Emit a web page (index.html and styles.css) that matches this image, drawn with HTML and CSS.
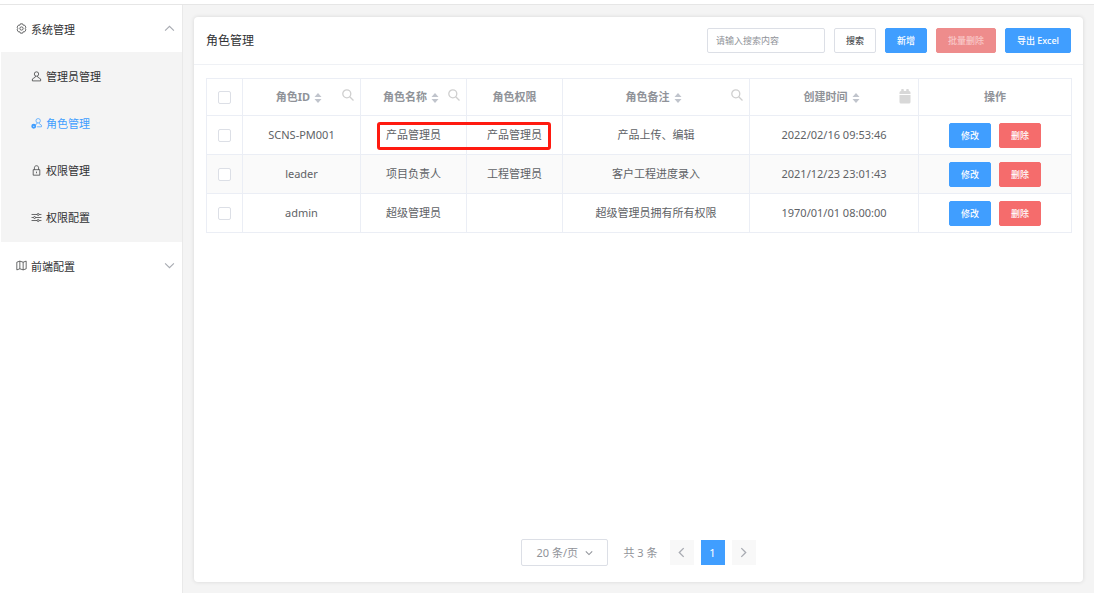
FILE: index.html
```
<!DOCTYPE html>
<html lang="zh-CN">
<head>
    <meta charset="UTF-8">
    <meta name="viewport" content="width=device-width, initial-scale=1.0">
    <title>角色管理</title>
    <link rel="stylesheet" href="styles.css">
</head>
<body>
    <!-- shared icons -->
    <svg class="sprite" aria-hidden="true">
        <symbol id="icon-search" viewBox="0 0 12 12">
            <circle cx="4.8" cy="4.8" r="4" />
            <path d="M7.7 7.7L11.5 11.5" />
        </symbol>
        <symbol id="icon-up" viewBox="0 0 10 10"><path d="M1 7L5 3L9 7" /></symbol>
        <symbol id="icon-down" viewBox="0 0 10 10"><path d="M1 3L5 7L9 3" /></symbol>
        <symbol id="icon-left" viewBox="0 0 10 10"><path d="M7 1L3 5L7 9" /></symbol>
        <symbol id="icon-right" viewBox="0 0 10 10"><path d="M3 1L7 5L3 9" /></symbol>
        <symbol id="icon-sort" viewBox="0 0 8 12">
            <path d="M4 1L7.5 5H0.5ZM4 11L7.5 7H0.5Z" />
        </symbol>
    </svg>

    <header class="topbar"></header>
    <div class="layout">
        <nav class="sidebar">
            <button class="menu-title" type="button">
                <svg class="icon" viewBox="0 0 20 20">
                    <path d="M8 1.5H12L13 4L15.5 3.8L18 7.5L16.8 10L18 12.5L15.5 16.2L13 16L12 18.5H8L7 16L4.5 16.2L2 12.5L3.2 10L2 7.5L4.5 3.8L7 4Z" />
                    <circle cx="10" cy="10" r="3" />
                </svg>
                <span>系统管理</span>
                <svg class="icon arrow"><use href="#icon-up" /></svg>
            </button>
            <div class="submenu">
                <a href="#" class="menu-item">
                    <svg class="icon" viewBox="0 0 20 20">
                        <circle cx="10" cy="5.5" r="4" />
                        <path d="M8 9.5V11L2.5 14.5V18H17.5V14.5L12 11V9.5" />
                    </svg>
                    <span>管理员管理</span>
                </a>
                <a href="#" class="menu-item active">
                    <svg class="icon" viewBox="0 0 20 20">
                        <circle cx="13" cy="5" r="4" />
                        <path d="M11 9V10.5L8 12M15 9V10.5L19 13V16H11" />
                        <circle cx="5" cy="15" r="2.8" stroke-width="3.4" />
                    </svg>
                    <span>角色管理</span>
                </a>
                <a href="#" class="menu-item">
                    <svg class="icon" viewBox="0 0 20 20">
                        <path d="M4 8.5H16V18.5H4ZM6.2 8.5V5C6.2 0 13.8 0 13.8 5V8.5M10 12V15" />
                    </svg>
                    <span>权限管理</span>
                </a>
                <a href="#" class="menu-item">
                    <svg class="icon" viewBox="0 0 20 20">
                        <path d="M1 4.5H11M15 4.5H19M1 10H4.5M8.5 10H19M1 15.5H11M15 15.5H19" />
                        <circle cx="13" cy="4.5" r="1.8" />
                        <circle cx="6.5" cy="10" r="1.8" />
                        <circle cx="13" cy="15.5" r="1.8" />
                    </svg>
                    <span>权限配置</span>
                </a>
            </div>
            <button class="menu-title" type="button">
                <svg class="icon" viewBox="0 0 20 20">
                    <path d="M1.5 4L7 2L13 4L18.5 2V16L13 18L7 16L1.5 18ZM7 2V16M13 4V18" />
                </svg>
                <span>前端配置</span>
                <svg class="icon arrow"><use href="#icon-down" /></svg>
            </button>
        </nav>

        <main class="main">
            <section class="card">
                <div class="card-header">
                    <h1>角色管理</h1>
                    <form class="toolbar">
                        <input type="text" class="search-input" placeholder="请输入搜索内容" aria-label="搜索内容">
                        <button type="button" class="btn">搜索</button>
                        <button type="button" class="btn primary">新增</button>
                        <button type="button" class="btn danger" disabled>批量删除</button>
                        <button type="button" class="btn primary">导出 Excel</button>
                    </form>
                </div>

                <div class="card-body">
                    <table>
                        <colgroup>
                            <col class="col-check">
                            <col class="col-id">
                            <col class="col-name">
                            <col class="col-auth">
                            <col class="col-remark">
                            <col class="col-time">
                            <col class="col-action">
                        </colgroup>
                        <thead>
                            <tr>
                                <th><input type="checkbox" aria-label="全选"></th>
                                <th class="sortable">角色ID<svg class="sort"><use href="#icon-sort" /></svg><svg class="filter"><use href="#icon-search" /></svg></th>
                                <th class="sortable">角色名称<svg class="sort"><use href="#icon-sort" /></svg><svg class="filter"><use href="#icon-search" /></svg></th>
                                <th>角色权限</th>
                                <th class="sortable">角色备注<svg class="sort"><use href="#icon-sort" /></svg><svg class="filter"><use href="#icon-search" /></svg></th>
                                <th class="sortable">创建时间<svg class="sort"><use href="#icon-sort" /></svg><svg class="filter calendar" viewBox="0 0 12 15">
                                    <path d="M0.5 5V3.5Q0.5 2 2 2H2.2V0.8Q2.2 0 3 0H4Q4.8 0 4.8 0.8V2H7.2V0.8Q7.2 0 8 0H9Q9.8 0 9.8 0.8V2H10Q11.5 2 11.5 3.5V5ZM0.5 6H11.5V13Q11.5 14.5 10 14.5H2Q0.5 14.5 0.5 13Z" />
                                </svg></th>
                                <th>操作</th>
                            </tr>
                        </thead>
                        <tbody>
                            <tr>
                                <td><input type="checkbox" aria-label="SCNS-PM001"></td>
                                <td>SCNS-PM001</td>
                                <td class="marked">产品管理员</td>
                                <td>产品管理员</td>
                                <td>产品上传、编辑</td>
                                <td>2022/02/16 09:53:46</td>
                                <td><div class="actions"><button type="button" class="btn primary">修改</button><button type="button" class="btn danger">删除</button></div></td>
                            </tr>
                            <tr>
                                <td><input type="checkbox" aria-label="leader"></td>
                                <td>leader</td>
                                <td>项目负责人</td>
                                <td>工程管理员</td>
                                <td>客户工程进度录入</td>
                                <td>2021/12/23 23:01:43</td>
                                <td><div class="actions"><button type="button" class="btn primary">修改</button><button type="button" class="btn danger">删除</button></div></td>
                            </tr>
                            <tr>
                                <td><input type="checkbox" aria-label="admin"></td>
                                <td>admin</td>
                                <td>超级管理员</td>
                                <td></td>
                                <td>超级管理员拥有所有权限</td>
                                <td>1970/01/01 08:00:00</td>
                                <td><div class="actions"><button type="button" class="btn primary">修改</button><button type="button" class="btn danger">删除</button></div></td>
                            </tr>
                        </tbody>
                    </table>
                </div>

                <div class="pagination">
                    <div class="page-size">
                        <select aria-label="每页条数">
                            <option>20 条/页</option>
                            <option>50 条/页</option>
                        </select>
                        <svg><use href="#icon-down" /></svg>
                    </div>
                    <span class="total">共 3 条</span>
                    <div class="pager">
                        <button type="button" aria-label="上一页" disabled><svg><use href="#icon-left" /></svg></button>
                        <button type="button" class="current">1</button>
                        <button type="button" aria-label="下一页" disabled><svg><use href="#icon-right" /></svg></button>
                    </div>
                </div>
            </section>
        </main>
    </div>
</body>
</html>
```
FILE: styles.css
```
*, *::after {
    box-sizing: border-box;
}

body {
    margin: 0;
    min-height: 100vh;
    display: flex;
    flex-direction: column;
    font-family: "Noto Sans", "Noto Sans CJK SC", sans-serif;
    font-size: 11px;
    line-height: 16px;
    color: #606266;
    background-color: #fff;
}

button, input, select {
    font-family: inherit;
    margin: 0;
}

svg {
    fill: none;
    stroke: currentColor;
}

.sprite {
    position: absolute;
    width: 0;
    height: 0;
}

.topbar {
    height: 5px;
    border-bottom: 1px solid #e6e6e6;
}

.layout {
    flex: 1;
    display: flex;
}

/* sidebar */
.sidebar {
    width: 183px;
    padding-left: 1px;
    border-right: 1px solid #e9e9e9;
}

.menu-title, .menu-item {
    display: flex;
    align-items: center;
    gap: 4px;
    width: 100%;
    height: 47px;
    color: #303133;
    font-size: 11px;
    text-decoration: none;
}

.menu-title {
    padding: 0 7px 0 15px;
    border: none;
    background: none;
    cursor: pointer;
}

.menu-item {
    padding-left: 30px;
}

.menu-item.active {
    color: #409eff;
}

.submenu {
    padding: 1px 0;
    background-color: #f4f4f4;
}

.icon {
    width: 11px;
    height: 11px;
    stroke-width: 1.3;
    flex: none;
}

.arrow {
    margin-left: auto;
    stroke-width: 1;
    color: #a8abb2;
}

/* content */
.main {
    flex: 1;
    min-width: 0;
    display: flex;
    padding: 12px 11px 11px;
    background-color: #f4f4f4;
}

.card {
    flex: 1;
    min-width: 0;
    display: flex;
    flex-direction: column;
    background-color: #fff;
    border-radius: 4px;
    box-shadow: 0 0 4px rgba(0, 0, 0, 0.12);
}

.card-header {
    display: flex;
    justify-content: space-between;
    align-items: center;
    height: 48px;
    padding: 0 12px;
    border-bottom: 1px solid #eff1f5;
}

h1 {
    margin: 0;
    font-size: 12px;
    font-weight: normal;
    color: #303133;
}

.toolbar {
    display: flex;
    gap: 9px;
}

.search-input {
    width: 118px;
    height: 25px;
    padding: 0 8px;
    border: 1px solid #dcdfe6;
    border-radius: 2px;
    font-size: 9px;
}

.search-input::placeholder {
    color: #909399;
}

.btn {
    height: 25px;
    padding: 0 11px;
    border: 1px solid #dcdfe6;
    border-radius: 2px;
    background-color: #fff;
    color: #505256;
    font-size: 9px;
    font-weight: 500;
    white-space: nowrap;
    cursor: pointer;
}

.btn.primary {
    background-color: #409eff;
    border-color: #409eff;
    color: #fff;
}

.btn.danger {
    background-color: #f56c6c;
    border-color: #f56c6c;
    color: #fff;
}

.btn.danger:disabled {
    background-color: #ee8c8c;
    border-color: #ee8c8c;
    color: #f9c8c8;
}

/* table */
.card-body {
    flex: 1;
    padding: 13px 12px;
}

table {
    width: 100%;
    table-layout: fixed;
    border-collapse: collapse;
}

.col-check { width: 36px; }
.col-id { width: 118px; }
.col-name { width: 106px; }
.col-auth { width: 96px; }
.col-remark { width: 187px; }
.col-time { width: 169px; }
.col-action { width: 153px; }

th, td {
    position: relative;
    height: 39px;
    padding: 0;
    border: 1px solid #ebeef5;
    text-align: center;
}

th {
    height: 37px;
    color: #909399;
    font-weight: bold;
}

th.sortable {
    padding-right: 5px;
}

tbody tr:nth-child(even) {
    background-color: #fafafa;
}

.sort {
    width: 8px;
    height: 12px;
    margin-left: 4px;
    vertical-align: middle;
    fill: #c0c4cc;
    stroke: none;
}

.filter {
    position: absolute;
    top: 10px;
    right: 6px;
    width: 12px;
    height: 12px;
    color: #cfcfcf;
    stroke-width: 1.3;
}

.filter.calendar {
    right: 7px;
    height: 15px;
    fill: #d8d8d8;
    stroke: none;
}

input[type="checkbox"] {
    appearance: none;
    display: block;
    width: 13px;
    height: 13px;
    margin: 0 auto;
    border: 1px solid #dcdfe6;
    border-radius: 2px;
    background-color: #fff;
}

/* red frame over the name and permission cells */
.marked::after {
    content: "";
    position: absolute;
    z-index: 1;
    top: 6px;
    left: 16px;
    width: 174px;
    height: 28px;
    border: 3px solid #ff1a10;
    border-radius: 3px;
}

.actions {
    display: flex;
    justify-content: center;
    gap: 8px;
}

/* pagination */
.pagination {
    display: flex;
    justify-content: center;
    align-items: center;
    padding-bottom: 16px;
    color: #909399;
}

.page-size {
    position: relative;
}

.page-size select {
    appearance: none;
    width: 87px;
    height: 27px;
    padding: 0 14px;
    border: 1px solid #dcdfe6;
    border-radius: 2px;
    background-color: #fff;
    color: #909399;
    font-size: 11px;
}

.page-size svg {
    position: absolute;
    top: 10px;
    right: 15px;
    width: 8px;
    height: 8px;
    stroke-width: 1.3;
    pointer-events: none;
}

.total {
    margin: 0 12px 0 15px;
}

.pager {
    display: flex;
    gap: 7px;
}

.pager button {
    display: flex;
    justify-content: center;
    align-items: center;
    width: 24px;
    height: 25px;
    padding: 0;
    border: none;
    background-color: #f8f8f8;
    color: #a8abb2;
    font-size: 11px;
}

.pager button.current {
    background-color: #409eff;
    color: #fff;
}

.pager svg {
    width: 11px;
    height: 11px;
    stroke-width: 1.2;
}
```
